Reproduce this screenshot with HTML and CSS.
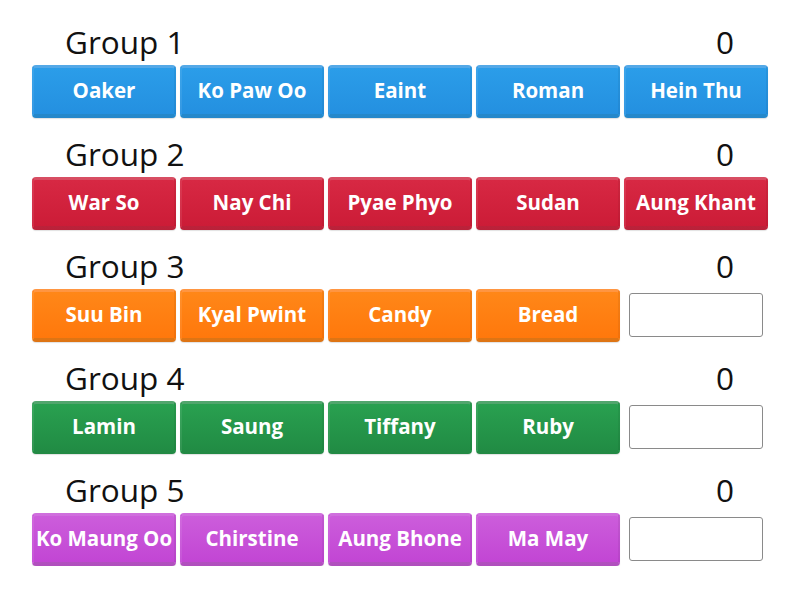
FILE: index.html
```html
<!DOCTYPE html>
<html>
<head>
<meta charset="utf-8">
<link rel="stylesheet" href="styles.css">
</head>
<body>
<div class="board">
  <section class="group">
    <div class="head"><span class="name">Group 1</span><span class="score">0</span></div>
    <div class="tiles">
      <div class="tile blue">Oaker</div>
      <div class="tile blue">Ko Paw Oo</div>
      <div class="tile blue">Eaint</div>
      <div class="tile blue">Roman</div>
      <div class="tile blue">Hein Thu</div>
    </div>
  </section>
  <section class="group">
    <div class="head"><span class="name">Group 2</span><span class="score">0</span></div>
    <div class="tiles">
      <div class="tile red">War So</div>
      <div class="tile red">Nay Chi</div>
      <div class="tile red">Pyae Phyo</div>
      <div class="tile red">Sudan</div>
      <div class="tile red">Aung Khant</div>
    </div>
  </section>
  <section class="group">
    <div class="head"><span class="name">Group 3</span><span class="score">0</span></div>
    <div class="tiles">
      <div class="tile orange">Suu Bin</div>
      <div class="tile orange">Kyal Pwint</div>
      <div class="tile orange">Candy</div>
      <div class="tile orange">Bread</div>
      <div class="cell"><div class="slot"></div></div>
    </div>
  </section>
  <section class="group">
    <div class="head"><span class="name">Group 4</span><span class="score">0</span></div>
    <div class="tiles">
      <div class="tile green">Lamin</div>
      <div class="tile green">Saung</div>
      <div class="tile green">Tiffany</div>
      <div class="tile green">Ruby</div>
      <div class="cell"><div class="slot"></div></div>
    </div>
  </section>
  <section class="group">
    <div class="head"><span class="name">Group 5</span><span class="score">0</span></div>
    <div class="tiles">
      <div class="tile purple">Ko Maung Oo</div>
      <div class="tile purple">Chirstine</div>
      <div class="tile purple">Aung Bhone</div>
      <div class="tile purple">Ma May</div>
      <div class="cell"><div class="slot"></div></div>
    </div>
  </section>
</div>
</body>
</html>
```

FILE: styles.css
```css
html, body {
  margin: 0;
  padding: 0;
  background: #ffffff;
  font-family: "Open Sans", "Noto Sans", sans-serif;
}

.board {
  width: 736px;
  padding: 23px 32px 0 32px;
  display: flex;
  flex-direction: column;
  gap: 17px;
}

.group {
  display: flex;
  flex-direction: column;
}

.head {
  height: 42px;
  line-height: 38px;
  font-size: 31.5px;
  color: #111;
  display: flex;
  justify-content: space-between;
  padding: 0 34px 0 33px;
}

.tiles {
  display: grid;
  grid-template-columns: repeat(5, 144px);
  gap: 4px;
}

.tile {
  box-sizing: border-box;
  height: 53px;
  border-radius: 4px;
  border-top: 3px solid rgba(255, 255, 255, 0.22);
  border-bottom: 4px solid rgba(0, 0, 0, 0.13);
  border-left: 2px solid rgba(255, 255, 255, 0.08);
  border-right: 2px solid rgba(0, 0, 0, 0.05);
  color: #ffffff;
  font-weight: 700;
  font-size: 20.5px;
  display: flex;
  align-items: center;
  justify-content: center;
  white-space: nowrap;
  padding-bottom: 2px;
  box-shadow: 0 1px 1px rgba(0, 0, 0, 0.12);
  background-clip: padding-box;
}

.blue { background: linear-gradient(#2b9de9, #2490e0); background-color: #2a98e6; }
.red { background: linear-gradient(#d72843, #cc1c37); background-color: #d2213c; }
.orange { background: linear-gradient(#ff8718, #ff780c); background-color: #ff7f10; }
.green { background: linear-gradient(#29a050, #218c44); background-color: #249548; }
.purple { background: linear-gradient(#cc5ddb, #c246d4); background-color: #c851d8; }

.cell {
  height: 53px;
  padding: 4px 5px 5px 5px;
  box-sizing: border-box;
}

.slot {
  height: 100%;
  box-sizing: border-box;
  border: 1px solid #8a8a8a;
  border-radius: 3px;
  background: #fff;
}
```
